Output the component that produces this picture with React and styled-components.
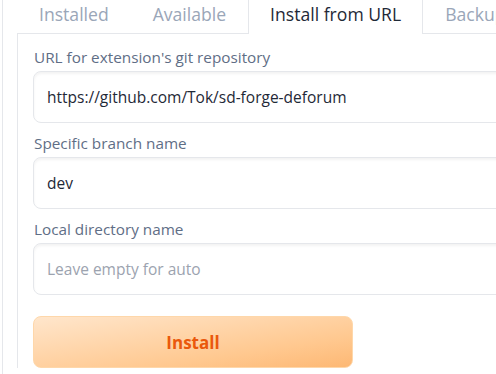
import React from "react";
import styled, { createGlobalStyle } from "styled-components";

const Global = createGlobalStyle`
  html, body { margin: 0; padding: 0; background: #ffffff; overflow: hidden; }
  body { font-family: "Open Sans", "Noto Sans", sans-serif; }
  * { box-sizing: border-box; }
`;

const Page = styled.div`
  width: 496px;
  height: 374px;
  overflow: hidden;
  padding-left: 2px;
`;

const Outer = styled.div`
  border-left: 1px solid #e5e7eb;
  padding-left: 14px;
  height: 100%;
  width: 700px;
`;

const TabBar = styled.div`
  display: flex;
  height: 34px;
  border-bottom: 1px solid #e5e7eb;
`;

const Tab = styled.div`
  padding: 0 21px 6px;
  display: flex;
  align-items: center;
  font-size: 17.6px;
  white-space: nowrap;
  color: ${(p) => (p.$active ? "#1f2937" : "#9aa6b8")};
  background: #ffffff;
  border-left: 1px solid ${(p) => (p.$active ? "#e5e7eb" : "transparent")};
  border-right: 1px solid ${(p) => (p.$active ? "#e5e7eb" : "transparent")};
  margin-bottom: ${(p) => (p.$active ? "-1px" : "0")};
  height: ${(p) => (p.$active ? "34px" : "33px")};
`;

const Panel = styled.div`
  border-left: 1px solid #e5e7eb;
  padding: 13px 0 0 15px;
  display: flex;
  flex-direction: column;
`;

const Field = styled.div`
  display: flex;
  flex-direction: column;
  gap: 3px;
  margin-bottom: 10px;
`;

const Label = styled.label`
  font-size: 15.3px;
  line-height: 21px;
  color: #5f6e86;
  padding-left: 1px;
`;

const Input = styled.input`
  height: 52px;
  width: 620px;
  border: 1px solid #e5e7eb;
  border-radius: 8px;
  background: #ffffff;
  box-shadow: inset 0 2px 3px rgba(0, 0, 0, 0.05);
  padding: 0 13px;
  font-family: inherit;
  font-size: 15.5px;
  color: #1f2937;
  outline: none;
  &::placeholder { color: #9ca3af; }
`;

const Button = styled.button`
  margin-top: 11px;
  width: 320px;
  height: 52px;
  border-radius: 8px;
  border: 1px solid #fed7aa;
  background: linear-gradient(to bottom right, #ffe6cc, #ffc88f 70%, #fdb874);
  color: #ea580c;
  font-family: inherit;
  font-weight: 700;
  font-size: 17px;
  cursor: pointer;
`;

export default function App() {
  return (
    <Page>
      <Global />
      <Outer>
        <TabBar>
          <Tab>Installed</Tab>
          <Tab>Available</Tab>
          <Tab $active>Install from URL</Tab>
          <Tab>Backup/Restore</Tab>
        </TabBar>
        <Panel>
          <Field>
            <Label>URL for extension's git repository</Label>
            <Input defaultValue="https://github.com/Tok/sd-forge-deforum" />
          </Field>
          <Field>
            <Label>Specific branch name</Label>
            <Input defaultValue="dev" />
          </Field>
          <Field>
            <Label>Local directory name</Label>
            <Input placeholder="Leave empty for auto" />
          </Field>
          <Button>Install</Button>
        </Panel>
      </Outer>
    </Page>
  );
}
